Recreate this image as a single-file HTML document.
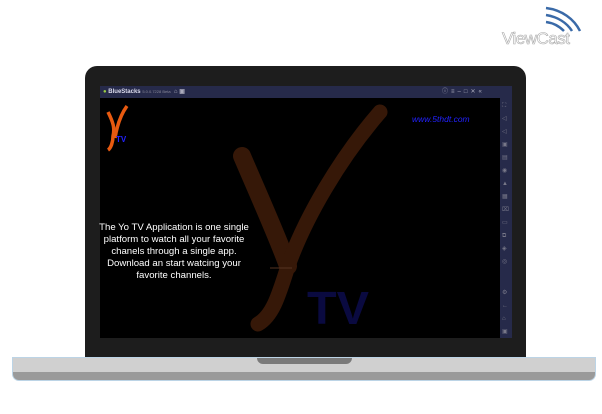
<!DOCTYPE html>
<html><head><style>
body{margin:0;width:602px;height:414px;background:#fff;position:relative;overflow:hidden;font-family:"Liberation Sans",sans-serif}
.a{position:absolute}
</style></head><body>
<div class="a" style="left:85px;top:66px;width:441px;height:296px;background:#1d1d1d;border-radius:12px 12px 0 0"></div>
<div class="a" style="left:100px;top:86px;width:412px;height:12px;background:#262a4a"></div>
<div class="a" style="left:103px;top:87px;font-size:6px;color:#dde;font-weight:bold;line-height:10px"><span style="color:#9c4">●</span> BlueStacks <span style="font-weight:normal;color:#889;font-size:4px">5.0.0.7228 Beta</span> <span style="color:#aab">&nbsp;⌂ ▣</span></div>
<div class="a" style="left:442px;top:87px;font-size:6px;color:#aab;line-height:10px;letter-spacing:3px">ⓘ≡–□✕«</div>
<div class="a" style="left:100px;top:98px;width:400px;height:240px;background:#000"></div>
<div class="a" style="left:500px;top:98px;width:12px;height:240px;background:#262a4a"></div>
<svg class="a" style="left:100px;top:98px" width="412" height="240">
<g stroke="#361808" fill="none" stroke-linecap="round">
<path d="M142 58 C160 100 178 140 188 168" stroke-width="18"/>
<path d="M280 14 C240 60 205 120 188 168 C178 200 172 218 158 226" stroke-width="15"/>
</g>
<path d="M170 170 L192 170" stroke="#553322" stroke-width="1"/>
<text x="207" y="226" font-family="Liberation Sans" font-weight="bold" font-size="46" fill="#0a0a40" textLength="62" lengthAdjust="spacingAndGlyphs">TV</text>
<path d="M8 14 C13 24 15 30 13 38 C13 44 11 50 8 52" stroke="#e85a10" stroke-width="3.5" fill="none"/>
<path d="M27 8 C21 16 17 28 15 40" stroke="#e85a10" stroke-width="3.5" fill="none"/>
<text x="16" y="44" font-family="Liberation Sans" font-weight="bold" font-size="8" fill="#22f">TV</text>
<text x="312" y="24" font-family="Liberation Sans" font-style="italic" font-size="8.5" fill="#22f">www.5thdt.com</text>
<g fill="#778" font-size="6" font-family="Liberation Sans">
<text x="402" y="9">⛶</text><text x="402" y="22">◁</text><text x="402" y="35">◁</text><text x="402" y="48">▣</text><text x="402" y="61">▤</text><text x="402" y="74">◉</text><text x="402" y="87">▲</text><text x="402" y="100">▦</text><text x="402" y="113">⌧</text><text x="402" y="126">▭</text><text x="402" y="139">⧉</text><text x="402" y="152">◈</text><text x="402" y="165">◎</text><text x="402" y="196">⚙</text><text x="402" y="209">←</text><text x="402" y="222">⌂</text><text x="402" y="235">▣</text>
</g>
</svg>
<div class="a" style="left:92px;top:222px;width:164px;text-align:center;color:#fff;font-size:9.6px;line-height:12px">The Yo TV Application is one single platform to watch all your favorite chanels through a single app. Download an start watcing your favorite channels.</div>
<div class="a" style="left:13px;top:358px;width:582px;height:22px;background:#d0d0d0;border-radius:0 0 6px 6px;overflow:hidden;box-shadow:0 0 0 1px #bcd4e6"><div class="a" style="left:0;top:14px;width:582px;height:8px;background:#9a9a9a"></div></div>
<div class="a" style="left:257px;top:358px;width:95px;height:6px;background:#7a7a7a;border-radius:0 0 6px 6px"></div>
<svg class="a" style="left:540px;top:5px" width="56" height="28"><g stroke="#3a6aa8" fill="none" stroke-width="2.5"><path d="M6 3 C22 5 34 14 40 26"/><path d="M6 10 C18 12 27 18 32 26"/><path d="M6 17 C14 18 20 22 24 26"/></g></svg>
<div class="a" style="left:502px;top:29px;font-size:17px;color:#fff;-webkit-text-stroke:0.6px #aaa;letter-spacing:-0.5px">ViewCast</div>
</body></html>
